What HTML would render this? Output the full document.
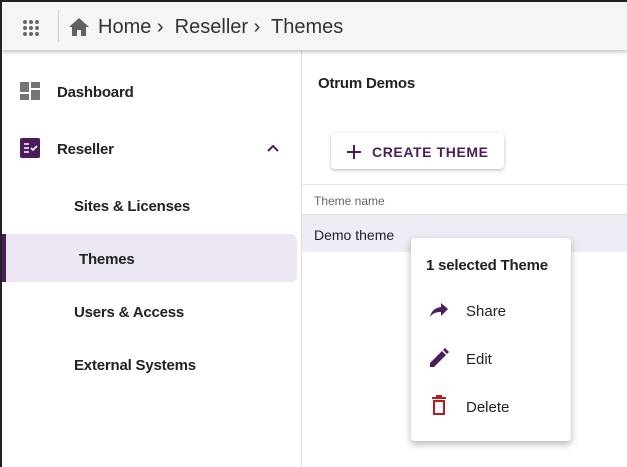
<!DOCTYPE html>
<html><head><style>
*{box-sizing:border-box;margin:0;padding:0}
body{width:627px;height:467px;overflow:hidden;background:#fff;font-family:"Liberation Sans",sans-serif;color:#212121;position:relative}
.hdr{position:absolute;left:2px;top:2px;width:625px;height:48px;background:#f5f5f5;box-shadow:0 2px 4px rgba(0,0,0,.25);z-index:2}
.abs{position:absolute}
.side{position:absolute;left:0;top:50px;width:302px;height:417px;border-right:1px solid #e0e0e0}
.item{position:absolute;font-size:15px;font-weight:bold;color:#222;letter-spacing:-0.2px}
.menu{position:absolute;left:411px;top:238px;width:160px;height:203px;background:#fff;border-radius:4px;box-shadow:0 3px 8px rgba(0,0,0,.3)}
.menu .t{position:absolute;left:55px;font-size:15px;color:#222}
</style></head><body>
<div class="abs" style="left:0;top:0;width:627px;height:2px;background:#222;z-index:3"></div>
<div class="abs" style="left:0;top:0;width:2px;height:467px;background:#222;z-index:3"></div>
<div class="hdr">
  <svg class="abs" style="left:20px;top:17px" width="18" height="18" viewBox="0 0 18 18" fill="#666">
    <circle cx="3" cy="3" r="2"/><circle cx="9" cy="3" r="2"/><circle cx="15" cy="3" r="2"/>
    <circle cx="3" cy="9" r="2"/><circle cx="9" cy="9" r="2"/><circle cx="15" cy="9" r="2"/>
    <circle cx="3" cy="15" r="2"/><circle cx="9" cy="15" r="2"/><circle cx="15" cy="15" r="2"/></svg>
  <div class="abs" style="left:56px;top:8px;width:1px;height:32px;background:#ccc"></div>
  <svg class="abs" style="left:66px;top:15px" width="22" height="20" viewBox="0 0 22 20" fill="#616161"><path d="M11 1L1 10h3v9h5v-6h4v6h5v-9h3z"/></svg>
  <div class="abs" style="left:96px;top:14px;font-size:20px;color:#333;white-space:nowrap">Home ›&nbsp; Reseller ›&nbsp; Themes</div>
</div>
<div class="side">
  <svg class="abs" style="left:20px;top:32px" width="20" height="18" viewBox="0 0 20 18" fill="#757575"><rect x="0" y="0" width="9" height="10"/><rect x="11" y="0" width="9" height="6"/><rect x="0" y="12" width="9" height="6"/><rect x="11" y="8" width="9" height="10"/></svg>
  <div class="item" style="left:57px;top:34px">Dashboard</div>
  <svg class="abs" style="left:20px;top:88px" width="20" height="20" viewBox="0 0 20 20"><rect width="20" height="20" rx="2" fill="#4a1d5c"/><path d="M4 6h5M4 10h5M4 14h5" stroke="#fff" stroke-width="1.6"/><path d="M11 10l2 2 4-4" stroke="#fff" stroke-width="1.6" fill="none"/></svg>
  <div class="item" style="left:57px;top:91px">Reseller</div>
  <svg class="abs" style="left:266px;top:93px" width="14" height="10" viewBox="0 0 14 10"><path d="M2 8l5-5 5 5" stroke="#4a1d5c" stroke-width="2" fill="none"/></svg>
  <div class="item" style="left:74px;top:148px">Sites &amp; Licenses</div>
  <div class="abs" style="left:0;top:184px;width:297px;height:48px;background:#ede7f4;border-radius:0 6px 6px 0"></div>
  <div class="abs" style="left:0;top:184px;width:6px;height:48px;background:#4a1d5c"></div>
  <div class="item" style="left:79px;top:201px">Themes</div>
  <div class="item" style="left:74px;top:254px">Users &amp; Access</div>
  <div class="item" style="left:74px;top:307px">External Systems</div>
</div>
<div class="abs" style="left:318px;top:75px;font-size:15px;font-weight:bold;color:#222;letter-spacing:-0.2px">Otrum Demos</div>
<div class="abs" style="left:331px;top:133px;width:173px;height:36px;border-radius:4px;background:#fff;box-shadow:0 1px 3px rgba(0,0,0,.3)"></div>
<svg class="abs" style="left:346px;top:144px" width="16" height="16" viewBox="0 0 16 16"><path d="M8 1v14M1 8h14" stroke="#4a1d5c" stroke-width="2"/></svg>
<div class="abs" style="left:372px;top:144px;font-size:14px;font-weight:bold;letter-spacing:0.6px;color:#4a1d5c">CREATE THEME</div>
<div class="abs" style="left:302px;top:184px;width:325px;height:1px;background:#e6e6e6"></div>
<div class="abs" style="left:314px;top:194px;font-size:12px;color:#666">Theme name</div>
<div class="abs" style="left:302px;top:214px;width:325px;height:1px;background:#e0e0e0"></div>
<div class="abs" style="left:302px;top:215px;width:325px;height:37px;background:#efecf6"></div>
<div class="abs" style="left:314px;top:227px;font-size:14px;color:#222">Demo theme</div>
<div class="menu">
  <div class="abs" style="left:15px;top:19px;font-size:15px;font-weight:bold;color:#222;letter-spacing:-0.2px">1 selected Theme</div>
  <svg class="abs" style="left:18px;top:65px" width="20" height="16" viewBox="0 0 20 16"><path d="M19 6L12 0v4C5 5 2 9 1 14c3-4 6-5 11-5v4z" fill="#4a1d5c"/></svg>
  <div class="t" style="top:65px">Share</div>
  <svg class="abs" style="left:18px;top:110px" width="20" height="20" viewBox="0 0 20 20"><path d="M1 19v-4L13 3l4 4L5 19z" fill="#4a1d5c"/><path d="M14 2l2-2 4 4-2 2z" fill="#4a1d5c"/></svg>
  <div class="t" style="top:113px">Edit</div>
  <svg class="abs" style="left:20px;top:157px" width="16" height="20" viewBox="0 0 16 20"><path d="M5 1h6M1 3h14" stroke="#b71c1c" stroke-width="2"/><rect x="3" y="6" width="10" height="13" fill="none" stroke="#b71c1c" stroke-width="2"/></svg>
  <div class="t" style="top:161px">Delete</div>
</div>
</body></html>
